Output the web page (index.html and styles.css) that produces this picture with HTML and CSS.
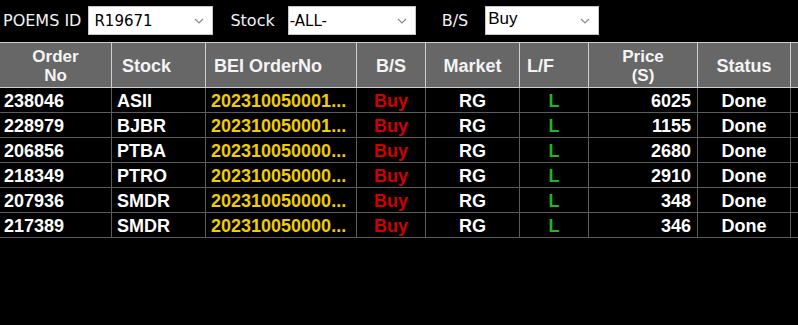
FILE: index.html
```html
<!DOCTYPE html>
<html>
<head>
<meta charset="utf-8">
<link rel="stylesheet" href="styles.css">
</head>
<body>
<div class="page">
  <div class="filters">
    <span class="label label-id">POEMS ID</span>
    <div class="combo combo-id"><span class="combo-text">R19671</span><svg class="chev" width="10" height="6" viewBox="0 0 10 6"><path d="M1 1 L5 5 L9 1" fill="none" stroke="#8a8a8a" stroke-width="1.2"/></svg></div>
    <span class="label label-stock">Stock</span>
    <div class="combo combo-stock"><span class="combo-text tight">-ALL-</span><svg class="chev" width="10" height="6" viewBox="0 0 10 6"><path d="M1 1 L5 5 L9 1" fill="none" stroke="#8a8a8a" stroke-width="1.2"/></svg></div>
    <span class="label label-bs">B/S</span>
    <div class="combo combo-bs"><span class="combo-text arial">Buy</span><svg class="chev" width="10" height="6" viewBox="0 0 10 6"><path d="M1 1 L5 5 L9 1" fill="none" stroke="#8a8a8a" stroke-width="1.2"/></svg></div>
  </div>

  <div class="grid">
    <div class="row head">
      <div class="c center two"><span>Order</span><span>No</span></div>
      <div class="c hl">Stock</div>
      <div class="c hl2">BEI OrderNo</div>
      <div class="c center">B/S</div>
      <div class="c center">Market</div>
      <div class="c hl3">L/F</div>
      <div class="c center two"><span>Price</span><span>(S)</span></div>
      <div class="c center">Status</div>
      <div class="c"></div>
    </div>

    <div class="row">
      <div class="c l1">238046</div><div class="c l2">ASII</div><div class="c l2 yel">202310050001...</div>
      <div class="c center red">Buy</div><div class="c center">RG</div><div class="c center grn">L</div>
      <div class="c right">6025</div><div class="c center">Done</div><div class="c"></div>
    </div>
    <div class="row">
      <div class="c l1">228979</div><div class="c l2">BJBR</div><div class="c l2 yel">202310050001...</div>
      <div class="c center red">Buy</div><div class="c center">RG</div><div class="c center grn">L</div>
      <div class="c right">1155</div><div class="c center">Done</div><div class="c"></div>
    </div>
    <div class="row">
      <div class="c l1">206856</div><div class="c l2">PTBA</div><div class="c l2 yel">202310050000...</div>
      <div class="c center red">Buy</div><div class="c center">RG</div><div class="c center grn">L</div>
      <div class="c right">2680</div><div class="c center">Done</div><div class="c"></div>
    </div>
    <div class="row">
      <div class="c l1">218349</div><div class="c l2">PTRO</div><div class="c l2 yel">202310050000...</div>
      <div class="c center red">Buy</div><div class="c center">RG</div><div class="c center grn">L</div>
      <div class="c right">2910</div><div class="c center">Done</div><div class="c"></div>
    </div>
    <div class="row">
      <div class="c l1">207936</div><div class="c l2">SMDR</div><div class="c l2 yel">202310050000...</div>
      <div class="c center red">Buy</div><div class="c center">RG</div><div class="c center grn">L</div>
      <div class="c right">348</div><div class="c center">Done</div><div class="c"></div>
    </div>
    <div class="row">
      <div class="c l1">217389</div><div class="c l2">SMDR</div><div class="c l2 yel">202310050000...</div>
      <div class="c center red">Buy</div><div class="c center">RG</div><div class="c center grn">L</div>
      <div class="c right">346</div><div class="c center">Done</div><div class="c"></div>
    </div>
  </div>
</div>
</body>
</html>
```

FILE: styles.css
```css
html, body {
  margin: 0;
  padding: 0;
  background: #000;
}
.page {
  width: 798px;
  height: 325px;
  overflow: hidden;
  background: #000;
}
.filters {
  height: 42px;
  box-sizing: border-box;
  padding-top: 6px;
  display: flex;
  align-items: flex-start;
}
.label {
  font-family: "DejaVu Sans", Verdana, sans-serif;
  font-size: 16px;
  color: #f2f2f8;
  line-height: 29px;
}
.label-id { margin-left: 3px; margin-right: 7px; }
.label-stock { margin-left: 17px; margin-right: 13px; }
.label-bs { margin-left: 26px; margin-right: 17px; }
.combo {
  height: 29px;
  box-sizing: border-box;
  background: #fff;
  border: 1px solid #c6c6c6;
  display: flex;
  align-items: center;
  justify-content: space-between;
  padding-right: 8px;
}
.combo-id { width: 125px; padding-left: 5px; }
.combo-stock { width: 128px; padding-left: 1px; }
.combo-bs { width: 114px; padding-left: 2px; }
.combo-text {
  font-family: "DejaVu Sans", Verdana, sans-serif;
  font-size: 15px;
  color: #000;
}
.combo-text.arial {
  font-family: "Liberation Sans", Arial, sans-serif;
  font-size: 17px;
  margin-top: -3px;
}
.chev { display: block; }

.grid {
  font-family: "Liberation Sans", Arial, sans-serif;
  font-weight: bold;
  font-size: 18px;
  color: #fff;
}
.row {
  display: grid;
  grid-template-columns: 112px 94px 151px 69px 94px 69px 109px 93px 120px;
  height: 25px;
  box-sizing: border-box;
  border-bottom: 1px solid #5c5c5c;
}
.row .c {
  border-right: 1px solid #5c5c5c;
  box-sizing: border-box;
  display: flex;
  align-items: center;
  white-space: nowrap;
  overflow: hidden;
  line-height: 18px;
  padding-top: 1px;
}
.row.head {
  height: 46px;
  background: #676767;
  border-top: 1px solid #cfcfcf;
  border-bottom: 1px solid #cfcfcf;
  color: #f4f4f4;
}
.row.head .c {
  border-right-color: #cfcfcf;
  padding-top: 2px;
}
.row.head .c.two {
  flex-direction: column;
  justify-content: center;
  font-size: 17px;
  line-height: 19px;
  padding-top: 1px;
}
.row.head .c.two span {
  display: block;
  height: 19px;
}
.c.center { justify-content: center; text-align: center; }
.c.right { justify-content: flex-end; padding-right: 6px; }
.c.l1 { padding-left: 4px; }
.c.l2 { padding-left: 5px; }
.c.hl { padding-left: 10px; }
.c.hl2 { padding-left: 8px; }
.c.hl3 { padding-left: 7px; }
.yel { color: #f0cc00; }
.red { color: #d00000; }
.grn { color: #22b422; }
```
